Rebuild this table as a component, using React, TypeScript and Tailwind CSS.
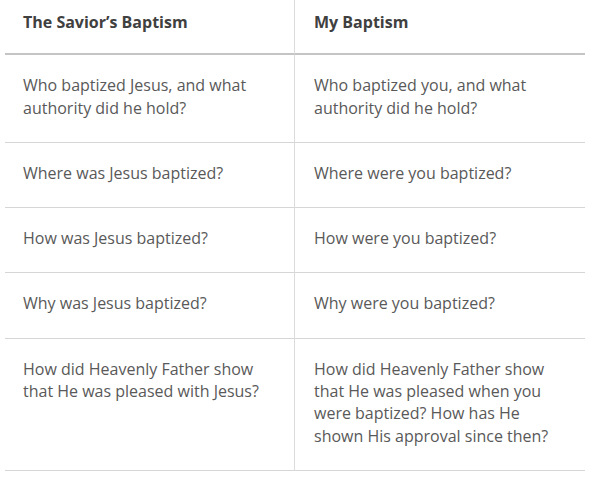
const rows: [string, string][] = [
  ['Who baptized Jesus, and what authority did he hold?', 'Who baptized you, and what authority did he hold?'],
  ['Where was Jesus baptized?', 'Where were you baptized?'],
  ['How was Jesus baptized?', 'How were you baptized?'],
  ['Why was Jesus baptized?', 'Why were you baptized?'],
  [
    'How did Heavenly Father show that He was pleased with Jesus?',
    'How did Heavenly Father show that He was pleased when you were baptized? How has He shown His approval since then?',
  ],
];

export default function App() {
  return (
    <div className="w-[601px] h-[480px] bg-white font-['Open_Sans',sans-serif] text-[16px] leading-[22.3px]">
      <div className="ml-[5px] w-[580px] grid grid-cols-2">
        {/* Header */}
        <div className="border-r border-r-[#dcdcdc] border-b-2 border-b-[#c4c4c4] pl-[18px] pr-4 pt-[11px] pb-[20px] font-bold text-[#404040]">
          The Savior’s Baptism
        </div>
        <div className="border-b-2 border-b-[#c4c4c4] pl-[19px] pr-4 pt-[11px] pb-[20px] font-bold text-[#404040]">
          My Baptism
        </div>

        {/* Questions */}
        {rows.map(([left, right], i) => (
          <div key={i} className="contents">
            <div className="border-r border-r-[#dcdcdc] border-b border-b-[#d6d6d6] pl-[18px] pr-6 pt-[19px] pb-[23px] text-[#595959]">
              {left}
            </div>
            <div className="border-b border-b-[#d6d6d6] pl-[19px] pr-6 pt-[19px] pb-[23px] text-[#595959]">
              {right}
            </div>
          </div>
        ))}
      </div>
    </div>
  );
}
